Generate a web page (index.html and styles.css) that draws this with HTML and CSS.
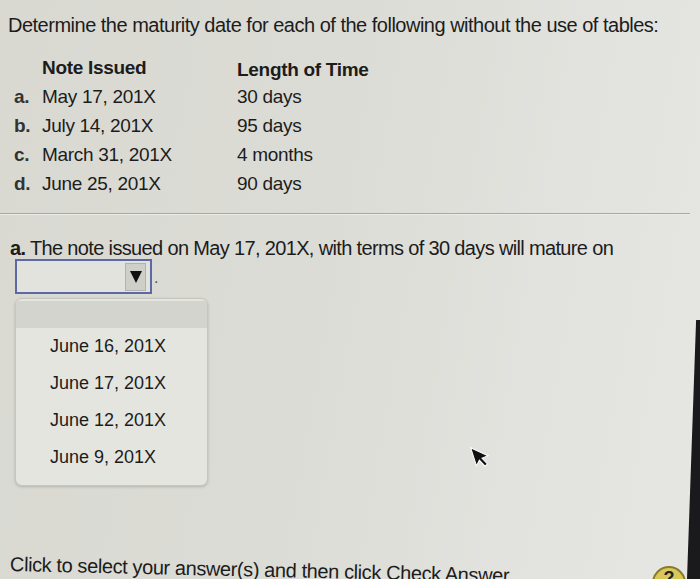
FILE: index.html
```html
<!DOCTYPE html>
<html>
<head>
<meta charset="utf-8">
<link rel="stylesheet" href="styles.css">
</head>
<body>
<div class="page">
  <p class="title">Determine the maturity date for each of the following without the use of tables:</p>
  <div class="notes">
    <span></span><span class="hd">Note Issued</span><span class="hd hd2">Length of Time</span>
    <span class="lt">a.</span><span>May 17, 201X</span><span>30 days</span>
    <span class="lt">b.</span><span>July 14, 201X</span><span>95 days</span>
    <span class="lt">c.</span><span>March 31, 201X</span><span>4 months</span>
    <span class="lt">d.</span><span>June 25, 201X</span><span>90 days</span>
  </div>
  <div class="rule"></div>
  <p class="question"><b>a.</b> The note issued on May 17, 201X, with terms of 30 days will mature on</p>
  <div class="answer">
    <div class="select">
      <div class="btn"><span class="tri"></span></div>
    </div>
    <span class="period">.</span>
  </div>
  <ul class="menu">
    <li class="blank"></li>
    <li>June 16, 201X</li>
    <li>June 17, 201X</li>
    <li>June 12, 201X</li>
    <li>June 9, 201X</li>
  </ul>
  <p class="hint">Click to select your answer(s) and then click Check Answer.</p>
</div>
<svg class="cursor" width="18" height="26" viewBox="0 0 18 26"><path d="M2 1 L2 20 L6.5 15.5 L10 23 L13 21.6 L9.6 14.4 L16 14 Z" fill="#111" stroke="#fff" stroke-width="1"/></svg>
<div class="bezel"></div>
<div class="help"><span>?</span></div>
</body>
</html>
```
FILE: styles.css
```css
html, body {
  margin: 0;
  padding: 0;
}
body {
  width: 700px;
  height: 579px;
  overflow: hidden;
  position: relative;
  background: linear-gradient(100deg, #d9d9d2 0%, #dcdcd6 45%, #e2e2de 75%, #e6e6e3 100%);
  font-family: "Liberation Sans", Arial, sans-serif;
  color: #1c1c1c;
}
.page {
  padding: 13px 0 0 8px;
}
.title {
  margin: 0;
  font-size: 20px;
  letter-spacing: -0.5px;
  line-height: 24px;
  white-space: nowrap;
}
.notes {
  margin: 16px 0 0 6px;
  display: grid;
  grid-template-columns: 28px 195px 1fr;
  grid-auto-rows: 29px;
  align-items: center;
  font-size: 19px;
  letter-spacing: -0.3px;
}
.hd {
  font-weight: bold;
}
.hd2 {
  position: relative;
  top: 2px;
}
.lt {
  font-weight: bold;
  color: #333;
}
.rule {
  margin: 15px 10px 0 -8px;
  border-top: 1px solid #a8a8a1;
  border-bottom: 1px solid #ecece8;
}
.question {
  margin: 23px 0 0 2px;
  font-size: 20px;
  letter-spacing: -0.65px;
  line-height: 20px;
  white-space: nowrap;
}
.answer {
  display: flex;
  align-items: flex-end;
  margin: 1px 0 0 7px;
}
.select {
  width: 129px;
  height: 31px;
  border: 2px solid #5d69a4;
  background: #e3e3de;
  display: flex;
  justify-content: flex-end;
  align-items: center;
  padding-right: 4px;
}
.btn {
  width: 19px;
  height: 26px;
  background: #cfcfc9;
  border: 1px solid #b3b3ad;
  display: flex;
  align-items: center;
  justify-content: center;
}
.tri {
  width: 0;
  height: 0;
  border-left: 6px solid transparent;
  border-right: 6px solid transparent;
  border-top: 12px solid #111;
}
.period {
  margin-left: 2px;
  font-size: 16px;
  line-height: 16px;
  color: #555;
  padding-bottom: 8px;
}
.menu {
  list-style: none;
  margin: 4px 0 0 7px;
  padding: 2px 0 9px 0;
  width: 191px;
  border: 1px solid #c6c6c0;
  border-radius: 7px;
  background: #e5e5e0;
  box-shadow: 0 1px 3px rgba(0, 0, 0, 0.18);
  font-size: 18px;
}
.menu li {
  height: 37px;
  line-height: 37px;
  padding-left: 34px;
}
.menu li.blank {
  height: 27px;
  background: #d4d4ce;
}
.hint {
  margin: 66px 0 0 2px;
  font-size: 20px;
  letter-spacing: -0.4px;
  line-height: 24px;
  transform-origin: left center;
  transform: rotate(1.3deg);
  white-space: nowrap;
}
.cursor {
  position: absolute;
  left: 472px;
  top: 444px;
  transform: rotate(-18deg);
}
.bezel {
  position: absolute;
  right: 0;
  top: 320px;
  width: 13px;
  height: 259px;
  background: #1a1a1c;
  clip-path: polygon(100% 0, 100% 100%, 0 100%, 70% 0);
}
.help {
  position: absolute;
  left: 652px;
  top: 566px;
  width: 30px;
  height: 30px;
  border-radius: 50%;
  background: #d9c75a;
  border: 2px solid #8a7a2a;
  display: flex;
  justify-content: center;
  font: bold 18px "Liberation Sans", sans-serif;
  color: #222;
}
```
